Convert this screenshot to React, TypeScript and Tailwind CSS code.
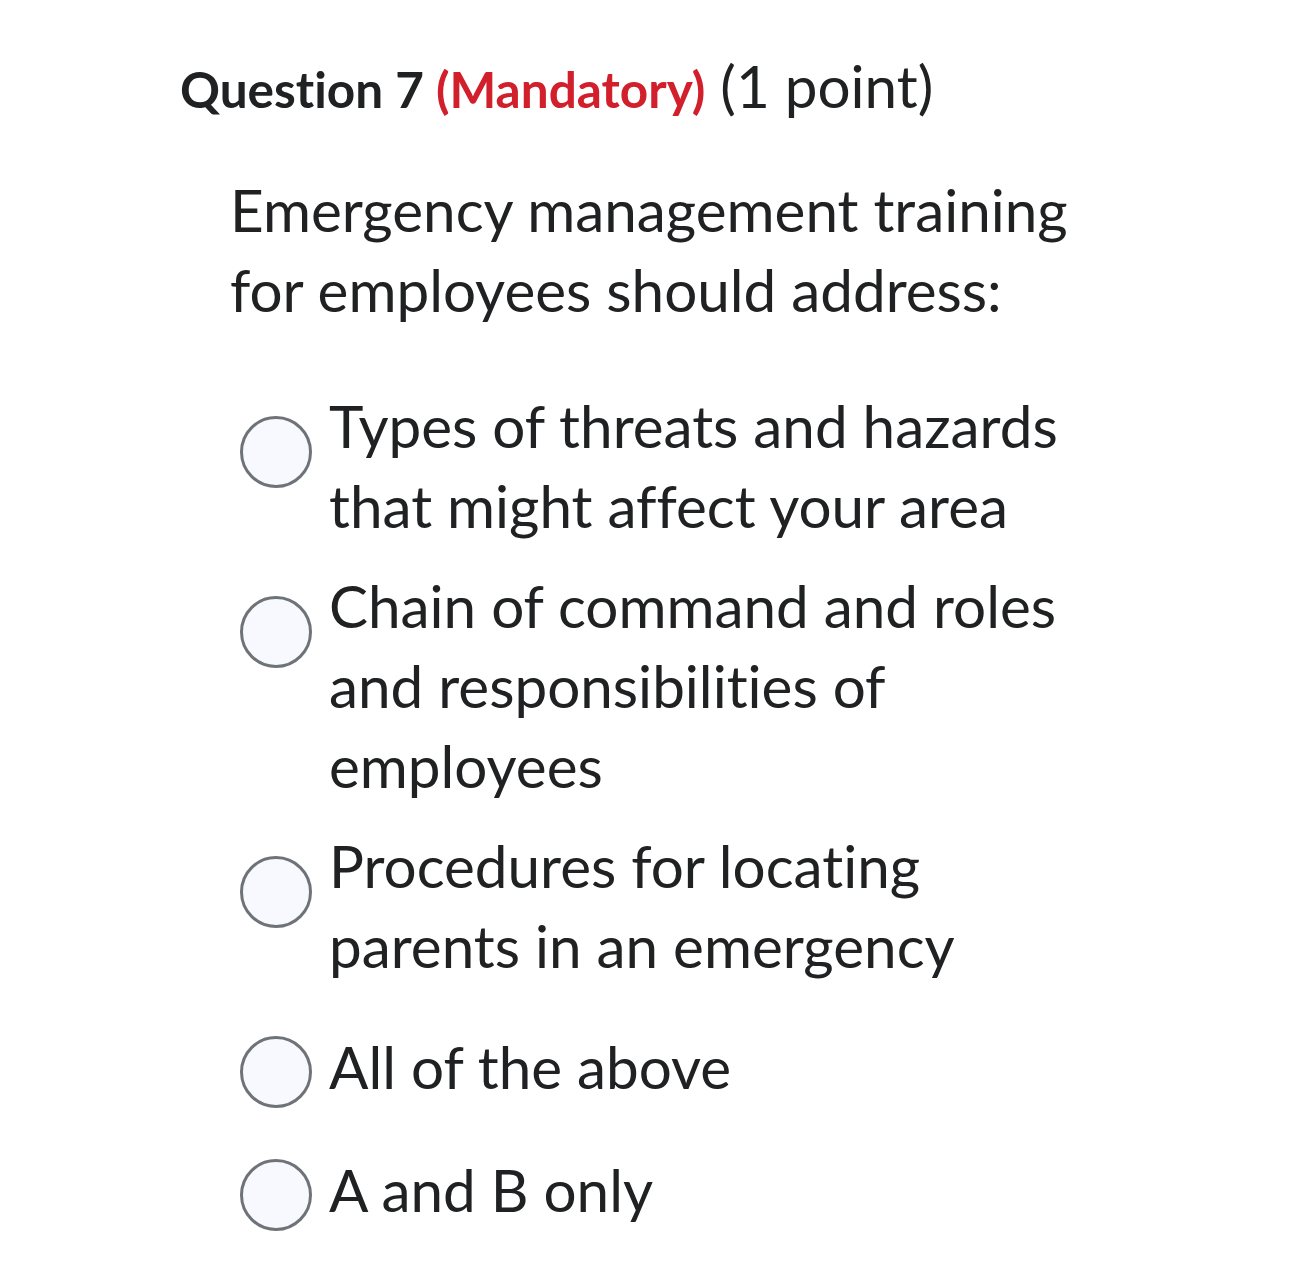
import React from "react";

type Opt = { lines: string; single?: boolean };

const options: Opt[] = [
  { lines: "Types of threats and hazards that might affect your area" },
  { lines: "Chain of command and roles and responsibilities of employees" },
  { lines: "Procedures for locating parents in an emergency" },
  { lines: "All of the above", single: true },
  { lines: "A and B only", single: true },
];

function Radio({ single }: { single?: boolean }) {
  return (
    <div
      className={
        "shrink-0 w-[72px] h-[72px] rounded-full border-[3px] border-[#6e7377] bg-[#f8f9fe] " +
        (single ? "mt-[10px]" : "mt-[31px]")
      }
    />
  );
}

export default function App() {
  return (
    <div
      className="w-[1290px] h-[1278px] bg-white text-[#202122] overflow-hidden [font-variant-ligatures:none]"
      style={{ fontFamily: "Lato, 'Noto Sans', sans-serif" }}
    >
      <div className="pl-[180px] pt-[53px] w-[1100px]">
        <div className="text-[49.5px] leading-[64px] whitespace-nowrap">
          <span className="font-bold">Question 7 </span>
          <span className="font-bold text-[#d11f2b]">(Mandatory)</span>
          <span className="text-[58.4px] leading-[64px]"> (1 point)</span>
        </div>
        <div className="pl-[50px] mt-[48px] text-[58.4px] leading-[80px]">
          Emergency management training for employees should address:
        </div>
        <div className="pl-[60px] mt-[56px] flex flex-col gap-[20px]">
          {options.map((o, i) => (
            <div
              key={i}
              className={"flex items-start gap-[17px] " + (o.single ? "pt-[21px]" : "")}
            >
              <Radio single={o.single} />
              <div className="text-[58.4px] leading-[80px]">{o.lines}</div>
            </div>
          ))}
        </div>
      </div>
    </div>
  );
}
